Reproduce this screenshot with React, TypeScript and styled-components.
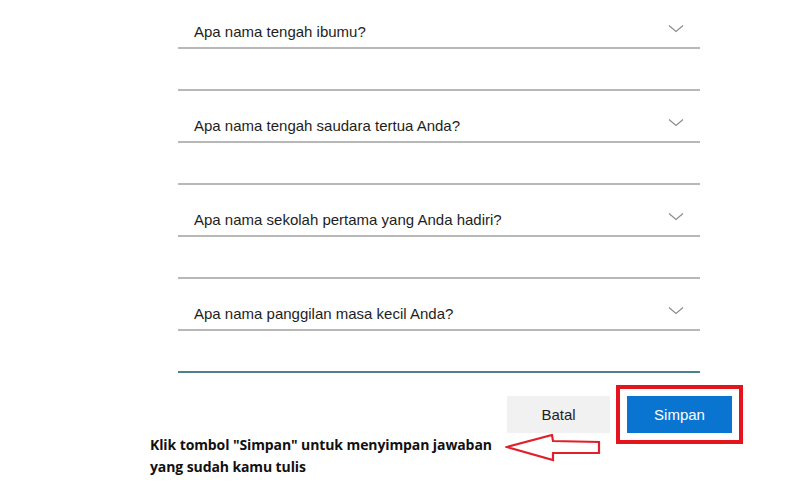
import React from 'react';
import styled, { createGlobalStyle } from 'styled-components';

const GlobalStyle = createGlobalStyle`
  html, body {
    margin: 0;
    padding: 0;
    background: #ffffff;
  }
  body {
    font-family: "Liberation Sans", Arial, sans-serif;
  }
`;

const Page = styled.div`
  width: 800px;
  height: 500px;
  overflow: hidden;
  background: #fff;
  display: flex;
  flex-direction: column;
`;

const Form = styled.div`
  margin-left: 178px;
  padding-top: 1px;
  width: 522px;
  display: flex;
  flex-direction: column;
  gap: 4px;
`;

const Block = styled.div`
  display: flex;
  flex-direction: column;
`;

const Header = styled.div`
  height: 48px;
  box-sizing: border-box;
  border-bottom: 2px solid #b8b8b8;
  display: flex;
  align-items: flex-end;
  justify-content: space-between;
  padding: 0 16px 5px 16px;
`;

const Question = styled.span`
  font-size: 15px;
  line-height: 20px;
  color: #1e1e1e;
`;

const Chevron = styled.svg`
  width: 16px;
  height: 9px;
  margin-bottom: 9px;
`;

const Answer = styled.input<{ $active?: boolean }>`
  height: 42px;
  box-sizing: border-box;
  border: none;
  border-bottom: 2px solid ${(p) => (p.$active ? '#4d7f8e' : '#b8b8b8')};
  outline: none;
  background: transparent;
  padding: 0 16px;
  font: inherit;
`;

const ButtonRow = styled.div`
  margin-top: 23px;
  display: flex;
  justify-content: flex-end;
  gap: 17px;
  padding-right: 68px;
`;

const Button = styled.button<{ $primary?: boolean }>`
  height: 37px;
  border: none;
  padding: 0;
  font-family: "Liberation Sans", Arial, sans-serif;
  font-size: 15px;
  width: ${(p) => (p.$primary ? '105px' : '103px')};
  background: ${(p) => (p.$primary ? '#0a74d1' : '#f1f1f1')};
  color: ${(p) => (p.$primary ? '#ffffff' : '#1e1e1e')};
  outline: ${(p) => (p.$primary ? '4px solid #e3141c' : 'none')};
  outline-offset: 7px;
`;

const Annotation = styled.div`
  display: flex;
  align-items: flex-start;
  padding-left: 150px;
  margin-top: 1px;
`;

const Note = styled.p`
  margin: 0;
  width: 355px;
  font-family: "Open Sans", sans-serif;
  font-weight: 700;
  font-size: 14px;
  letter-spacing: -0.1px;
  line-height: 22px;
  color: #111;
`;

const Arrow = styled.svg`
  width: 100px;
  height: 30px;
  flex-shrink: 0;
`;

const questions = [
  'Apa nama tengah ibumu?',
  'Apa nama tengah saudara tertua Anda?',
  'Apa nama sekolah pertama yang Anda hadiri?',
  'Apa nama panggilan masa kecil Anda?',
];

const App: React.FC = () => {
  return (
    <Page>
      <GlobalStyle />
      <Form>
        {questions.map((q, i) => (
          <Block key={q}>
            <Header>
              <Question>{q}</Question>
              <Chevron viewBox="0 0 16 9">
                <polyline points="1,1.5 8,7.5 15,1.5" fill="none" stroke="#8a8a8a" strokeWidth="1.1" />
              </Chevron>
            </Header>
            <Answer $active={i === questions.length - 1} />
          </Block>
        ))}
      </Form>
      <ButtonRow>
        <Button>Batal</Button>
        <Button $primary>Simpan</Button>
      </ButtonRow>
      <Annotation>
        <Note>Klik tombol "Simpan" untuk menyimpan jawaban yang sudah kamu tulis</Note>
        <Arrow viewBox="0 0 100 30">
          <polygon
            points="2,13 47,1 48,7 94,8 94,19 48,19 48,26"
            fill="none"
            stroke="#e0202a"
            strokeWidth="2.2"
            strokeLinejoin="miter"
          />
        </Arrow>
      </Annotation>
    </Page>
  );
};

export default App;
